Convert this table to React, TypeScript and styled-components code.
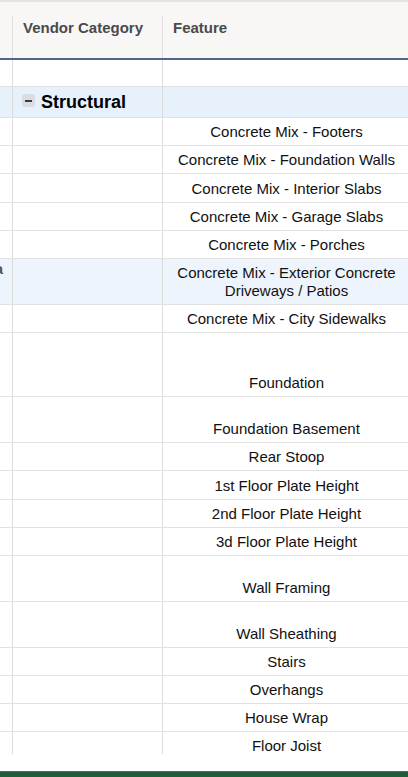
import React from 'react';
import styled, { createGlobalStyle } from 'styled-components';

const GlobalStyle = createGlobalStyle`
  html, body {
    margin: 0;
    padding: 0;
    background: #ffffff;
    overflow: hidden;
  }
  body {
    font-family: "Liberation Sans", Arial, sans-serif;
  }
`;

const Page = styled.div`
  width: 408px;
  height: 777px;
  display: flex;
  flex-direction: column;
  overflow: hidden;
  background: #fff;
`;

const Sheet = styled.div`
  flex: 1;
  display: flex;
  flex-direction: column;
  overflow: hidden;
  border-top: 2px solid #e4e4e4;
`;

const Body = styled.div`
  height: 694px;
  overflow: hidden;
`;

const HeaderRow = styled.div`
  display: grid;
  grid-template-columns: 12px 150px 248px;
  height: 58px;
  background: #f8f7f6;
  border-bottom: 2px solid #52668a;
  box-sizing: border-box;
`;

const HeadCell = styled.div<{ $first?: boolean }>`
  display: flex;
  align-items: center;
  padding-left: 11px;
  padding-bottom: 6px;
  font-size: 15px;
  font-weight: bold;
  color: #4a4a4a;
  position: relative;
  &::before {
    content: '';
    position: absolute;
    left: 0;
    top: 14px;
    bottom: 0;
    width: 1px;
    background: ${p => (p.$first ? 'transparent' : '#dedede')};
  }
`;

const Row = styled.div<{ $h: number; $bg?: string }>`
  display: grid;
  grid-template-columns: 12px 150px 248px;
  height: ${p => p.$h}px;
  background: ${p => p.$bg || '#fff'};
  border-bottom: 1px solid #e2e2e2;
  box-sizing: border-box;
`;

const Cell = styled.div<{ $center?: boolean }>`
  border-left: 1px solid #dcdcdc;
  display: flex;
  flex-direction: column;
  justify-content: flex-end;
  align-items: ${p => (p.$center ? 'center' : 'flex-start')};
  text-align: center;
  padding-bottom: 4px;
  font-size: 15px;
  line-height: 18px;
  color: #111;
  overflow: hidden;
  white-space: nowrap;
`;

const EdgeCell = styled.div`
  position: relative;
  overflow: hidden;
`;

const ClippedText = styled.span`
  position: absolute;
  right: 9px;
  top: 1px;
  font-size: 15px;
  font-weight: bold;
  color: #555;
`;

const GroupCell = styled.div`
  border-left: 1px solid #dcdcdc;
  display: flex;
  align-items: center;
  gap: 6px;
  padding-left: 9px;
  font-size: 18px;
  font-weight: bold;
  color: #000;
`;

const Toggle = styled.span`
  width: 13px;
  height: 13px;
  border-radius: 3px;
  background: #d9dce0;
  display: inline-flex;
  align-items: center;
  justify-content: center;
  margin-top: -3px;
  &::after {
    content: '';
    width: 7px;
    height: 2px;
    background: #3c3c3c;
  }
`;

const Footer = styled.div`
  height: 5px;
  background: #1e5c3a;
  border-top: 1px solid #3e7a58;
`;

type Item = { text: string[]; h: number; bg?: string; edge?: string };

const items: Item[] = [
  { text: ['Concrete Mix - Footers'], h: 28 },
  { text: ['Concrete Mix - Foundation Walls'], h: 28 },
  { text: ['Concrete Mix - Interior Slabs'], h: 29 },
  { text: ['Concrete Mix - Garage Slabs'], h: 28 },
  { text: ['Concrete Mix - Porches'], h: 28 },
  { text: ['Concrete Mix - Exterior Concrete', 'Driveways / Patios'], h: 46, bg: '#edf4fc', edge: 'a' },
  { text: ['Concrete Mix - City Sidewalks'], h: 28 },
  { text: ['Foundation'], h: 64 },
  { text: ['Foundation Basement'], h: 46 },
  { text: ['Rear Stoop'], h: 28 },
  { text: ['1st Floor Plate Height'], h: 29 },
  { text: ['2nd Floor Plate Height'], h: 28 },
  { text: ['3d Floor Plate Height'], h: 28 },
  { text: ['Wall Framing'], h: 46 },
  { text: ['Wall Sheathing'], h: 46 },
  { text: ['Stairs'], h: 28 },
  { text: ['Overhangs'], h: 28 },
  { text: ['House Wrap'], h: 28 },
  { text: ['Floor Joist'], h: 28 },
];

export default function App() {
  return (
    <Page>
      <GlobalStyle />
      <Sheet>
        <HeaderRow>
          <HeadCell $first />
          <HeadCell>Vendor Category</HeadCell>
          <HeadCell>Feature</HeadCell>
        </HeaderRow>
        <Body>
          <Row $h={27}>
            <EdgeCell />
            <Cell />
            <Cell />
          </Row>
          <Row $h={31} $bg="#e6f1fc">
            <EdgeCell />
            <GroupCell>
              <Toggle />
              Structural
            </GroupCell>
            <Cell />
          </Row>
          {items.map((it, i) => (
            <Row key={i} $h={it.h} $bg={it.bg}>
              <EdgeCell>{it.edge && <ClippedText>{it.edge}</ClippedText>}</EdgeCell>
              <Cell />
              <Cell $center>
                {it.text.map(t => (
                  <span key={t}>{t}</span>
                ))}
              </Cell>
            </Row>
          ))}
        </Body>
      </Sheet>
      <Footer />
    </Page>
  );
}
